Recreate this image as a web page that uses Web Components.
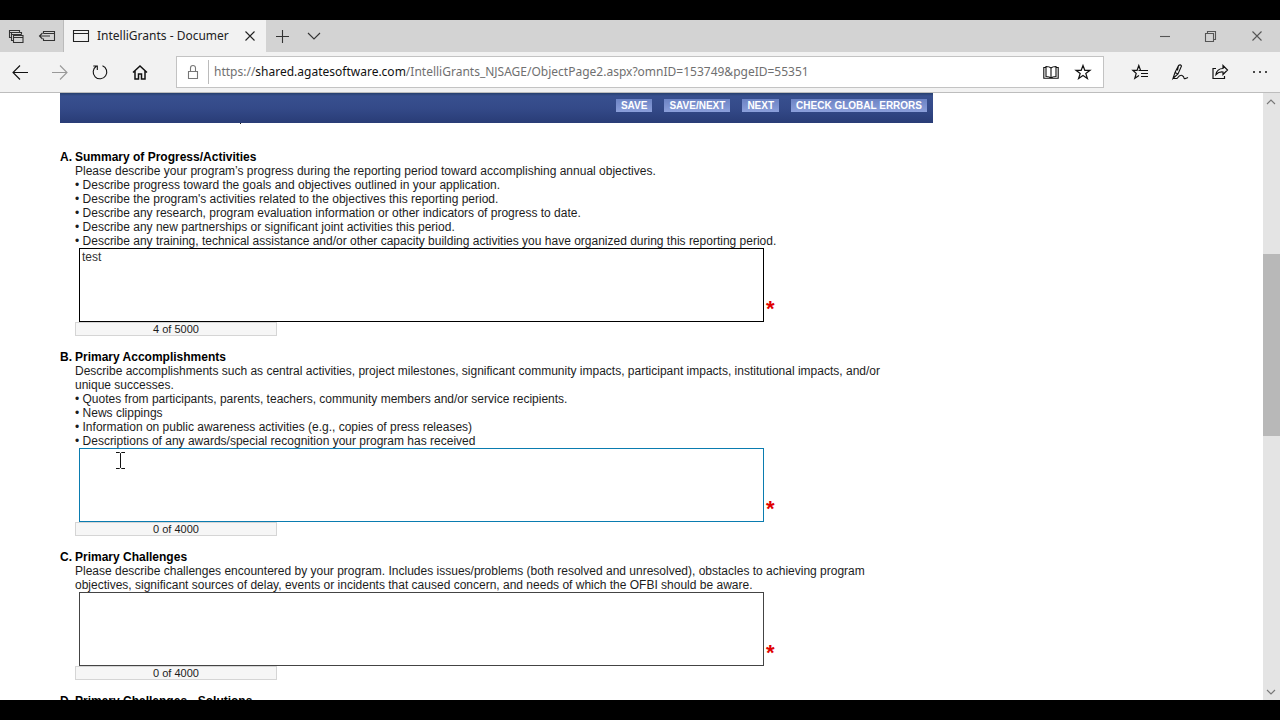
<!DOCTYPE html>
<html lang="en">
<head>
<meta charset="utf-8">
<title>IntelliGrants - Document</title>
<style>
html,body{height:100%;margin:0;background:#000}
body{font:12px/14px "Liberation Sans",Arial,sans-serif;color:#1c1c1c}
</style>
</head>
<body>
<browser-window></browser-window>
<script>
function define(name, html, setup) {
  const t = document.createElement('template');
  t.innerHTML = html;
  customElements.define(name, class extends HTMLElement {
    connectedCallback() {
      if (this.shadowRoot) return;
      const root = this.attachShadow({mode: 'open'});
      root.append(t.content.cloneNode(true));
      if (setup) setup(this, root);
    }
  });
}

const paths = {
  tabs: '<path d="M3.500 9.500h-2v-7h10v2M1.500 4.500h10M5.500 12.500h-2v-8h10v2M3.500 6.500h10M5.500 7.500h9.500v7h-9.500zM5.500 9.500h9.500"/>',
  aside: '<path d="M4.500 5.500v-2h11v9h-11v-2M4.500 5.500h11M0.500 8h10.500M3.500 5L0.500 8L3.500 11"/>',
  page: '<path d="M.5 2.500h15v11H.5zM.5 5.500h15"/>',
  close: '<path d="M3.500 3.500l9 9M12.500 3.500l-9 9"/>',
  plus: '<path d="M8.500 2v13M2 8.500h13"/>',
  down: '<path d="M2 5l6 6l6-6"/>',
  up: '<path d="M4 10.500l4-4l4 4"/>',
  lower: '<path d="M4 6.500l4 4l4-4"/>',
  back: '<path d="M16 8.500H1M8 1.500L1 8.500l7 7"/>',
  forward: '<path d="M0 8.500h15M8 1.500l7 7l-7 7"/>',
  reload: '<path d="M10.500 1.700A6.800 6.800 0 1 1 4.300 2.300M1.300 2h4v4"/>',
  home: '<path d="M1 8.500L8 2l7 6.500M3 7v8h3.500v-5h3v5H13V7" stroke-width="1.500"/>',
  lock: '<path d="M3.500 7.500h9v7h-9zM5.500 7.500V4a2.500 2.500 0 0 1 5 0v3.500"/>',
  book: '<path d="M8 4q-1.500-1.500-5-1.500v10Q6.500 12.500 8 14q1.500-1.500 5-1.500v-10Q9.500 2.500 8 4zM8 4v10M3 3.500H.8v10.800h14.400V3.500H13" stroke-width="1.100"/>',
  star: '<path d="M8 1.500l1.800 4.800h5.200l-4.200 3.200l1.600 5L8 11.500l-4.400 3l1.600-5L1 6.300h5.200z" stroke-width="1.200"/>',
  favs: '<path d="M8.500 6.300L6.800 1.500L5.100 6.300H.8l3.400 3.100l-1.400 4.900L7 11.500M6.500 6.500H16M9 9.500h7M9 12.500h7" stroke-width="1.200"/>',
  pen: '<path d="M1 14.500L3 8.500L6.500 1.500q2-1.500 3 .5L6 10zM3 8.500L6 10M6.500 1.500l-1 5M1 14.500h4q3-4 5-3t2 2.500t4-.5" stroke-width="1.100"/>',
  share: '<path d="M4 4.500H1v10h11.500v-2.500M4 10.500q1-6 7-6V1.500L15.500 6L11 10.500V8Q7 7.500 4 10.500z" stroke-width="1.200"/>',
  more: '<g fill="currentColor" stroke="none"><circle cx="2" cy="8" r="1"/><circle cx="8" cy="8" r="1"/><circle cx="14" cy="8" r="1"/></g>',
  min: '<path d="M3 8.500h10"/>',
  restore: '<path d="M2.500 5.500h8v8h-8zM4.500 5.500v-2h8v8h-2"/>'
};

define('ui-icon', `<style>
:host{display:block;width:16px;height:16px}
svg{display:block;width:100%;height:100%;fill:none;stroke:currentColor;stroke-width:1.1;overflow:visible}
</style><svg viewBox="0 0 16 16" aria-hidden="true"></svg>`,
(el, root) => { root.querySelector('svg').innerHTML = paths[el.getAttribute('name')]; });

define('icon-button', `<style>
:host{display:block}
button{display:flex;align-items:center;justify-content:center;width:100%;height:100%;padding:0;border:0;background:none;color:inherit}
</style><button type="button"></button>`,
(el, root) => {
  const button = root.querySelector('button');
  button.setAttribute('aria-label', el.getAttribute('label'));
  const icon = document.createElement('ui-icon');
  icon.setAttribute('name', el.getAttribute('name'));
  button.append(icon);
});

define('tab-strip', `<style>
:host{display:flex;height:32px;background:#d3d3d3;color:#333}
icon-button{width:32px}
.left{display:flex;width:64px;box-sizing:border-box;border-right:1px solid #bbb}
.tab{display:flex;align-items:center;gap:8px;width:202px;box-sizing:border-box;padding:0 0 0 9px;background:#f2f2f2;color:#222;font:12px/20px "Noto Sans",sans-serif}
.tab span{flex:1;white-space:nowrap}
.tab icon-button{height:32px;margin-left:-8px}
.window{display:flex;margin-left:auto;color:#555}
.window icon-button{width:46px}
</style>
<div class="left"><icon-button name="tabs" label="Tabs you've set aside"></icon-button><icon-button name="aside" label="Set these tabs aside"></icon-button></div>
<div class="tab"><ui-icon name="page"></ui-icon><span>IntelliGrants - Documer</span><icon-button name="close" label="Close tab"></icon-button></div>
<icon-button name="plus" label="New tab"></icon-button><icon-button name="down" label="Tab previews"></icon-button>
<div class="window"><icon-button name="min" label="Minimize"></icon-button><icon-button name="restore" label="Restore"></icon-button><icon-button name="close" label="Close"></icon-button></div>`);

define('address-bar', `<style>
:host{display:flex;align-items:center;height:41px;background:#f2f2f2;border-bottom:1px solid #bdbdbd;color:#111;box-sizing:border-box}
icon-button{width:40px;height:40px}
.dim{color:#999}
.url{flex:1;display:flex;align-items:center;height:32px;box-sizing:border-box;border:1px solid #c3c3c3;background:#fff;margin:0 16px;padding-right:4px}
.lock{width:31px;color:#777}
.url a{flex:1;border-left:1px solid #bbb;padding-left:5px;color:#707070;text-decoration:none;font:12px/24px "Noto Sans",sans-serif;white-space:nowrap}
.url span{color:#111}
.url .act{width:32px}
</style>
<icon-button name="back" label="Back"></icon-button><icon-button class="dim" name="forward" label="Forward"></icon-button><icon-button name="reload" label="Refresh"></icon-button><icon-button name="home" label="Home"></icon-button>
<div class="url"><icon-button class="lock" name="lock" label="Site information"></icon-button><a href="#">https://<span>shared.agatesoftware.com</span>/IntelliGrants_NJSAGE/ObjectPage2.aspx?omnID=153749&amp;pgeID=55351</a><icon-button class="act" name="book" label="Reading view"></icon-button><icon-button class="act" name="star" label="Add to favorites"></icon-button></div>
<icon-button name="favs" label="Favorites"></icon-button><icon-button name="pen" label="Add notes"></icon-button><icon-button name="share" label="Share"></icon-button><icon-button name="more" label="Settings and more"></icon-button>`);

define('scroll-bar', `<style>
:host{display:flex;flex-direction:column;width:17px;background:#e4e4e4;color:#777}
ui-icon{height:17px;flex:none}
.before{flex:144}.thumb{flex:182;background:#b8b8b8}.after{flex:247}
</style><ui-icon name="up"></ui-icon><div class="before"></div><div class="thumb"></div><div class="after"></div><ui-icon name="lower"></ui-icon>`);

define('action-bar', `<style>
:host{display:flex;justify-content:flex-end;gap:12px;position:relative;height:30px;box-sizing:border-box;padding:6px 6px 0 0;background:linear-gradient(#263f6d,#38508f 3px,#344a89 50%,#293c76)}
:host::after{content:"";position:absolute;left:180px;top:30px;width:1px;height:1px;background:#222}
button{height:13px;border:0;padding:0 5px;background:linear-gradient(#6c83c4,#8b9fda);color:#fff;font:bold 10px/13px "Liberation Sans",Arial,sans-serif}
</style><button type="button">SAVE</button><button type="button">SAVE/NEXT</button><button type="button">NEXT</button><button type="button">CHECK GLOBAL ERRORS</button>`);

define('report-question', `<style>
:host{display:grid;grid-template-columns:15px minmax(0,1fr);padding-bottom:14px}
b,label{font-weight:bold;color:#000;white-space:nowrap}
.body{grid-column:2}
.field{display:flex;padding-left:4px;gap:2px}
textarea{width:685px;height:74px;box-sizing:border-box;margin:0;border:1px solid var(--edge,#444);padding:1px 2px;resize:none;background:#fff;color:#333;font:12px/14px "Liberation Sans",Arial,sans-serif;outline:0}
.req{align-self:flex-end;color:#e00000;font:bold 22px/26px "Liberation Sans",Arial,sans-serif}
output{display:block;width:202px;height:14px;box-sizing:border-box;border:1px solid #d5d5d5;background:#f6f6f6;text-align:center;font-size:11px;line-height:13px}
</style>
<b></b><label for="answer"></label>
<div class="body"><slot></slot><div class="field"><textarea id="answer"></textarea><span class="req">*</span></div><output for="answer"></output></div>`,
(el, root) => {
  root.querySelector('b').textContent = el.getAttribute('letter');
  root.querySelector('label').textContent = el.getAttribute('heading');
  const v = el.getAttribute('value') || '';
  root.querySelector('textarea').value = v;
  root.querySelector('output').textContent = v.length + ' of ' + el.getAttribute('max');
});

define('report-page', `<style>
:host{display:block;box-sizing:border-box;padding-left:60px;overflow:hidden;background:#fff}
main{max-width:873px}
form{padding-top:27px}
.active{--edge:#0a7cb0}
.filled{--edge:#000}
</style>
<main><action-bar></action-bar><form>
<report-question class="filled" letter="A." heading="Summary of Progress/Activities" value="test" max="5000">Please describe your program’s progress during the reporting period toward accomplishing annual objectives.<br>• Describe progress toward the goals and objectives outlined in your application.<br>• Describe the program's activities related to the objectives this reporting period.<br>• Describe any research, program evaluation information or other indicators of progress to date.<br>• Describe any new partnerships or significant joint activities this period.<br>• Describe any training, technical assistance and/or other capacity building activities you have organized during this reporting period.</report-question>
<report-question class="active" letter="B." heading="Primary Accomplishments" max="4000">Describe accomplishments such as central activities, project milestones, significant community impacts, participant impacts, institutional impacts, and/or<br>unique successes.<br>• Quotes from participants, parents, teachers, community members and/or service recipients.<br>• News clippings<br>• Information on public awareness activities (e.g., copies of press releases)<br>• Descriptions of any awards/special recognition your program has received</report-question>
<report-question letter="C." heading="Primary Challenges" max="4000">Please describe challenges encountered by your program. Includes issues/problems (both resolved and unresolved), obstacles to achieving program<br>objectives, significant sources of delay, events or incidents that caused concern, and needs of which the OFBI should be aware.</report-question>
<report-question letter="D." heading="Primary Challenges - Solutions" max="4000"></report-question>
</form></main>`);

define('browser-window', `<style>
:host{display:flex;flex-direction:column;position:relative;height:100vh;box-sizing:border-box;padding:20px 0;background:#000}
tab-strip,address-bar{flex:none}
.view{display:flex;flex:1;min-height:0}
report-page{flex:1;min-width:0}
.cursor{position:absolute;left:115px;top:452px;width:11px;height:17px;fill:none;stroke:#111}
</style>
<tab-strip></tab-strip><address-bar></address-bar>
<div class="view"><report-page></report-page><scroll-bar></scroll-bar></div>
<svg class="cursor" viewBox="0 0 11 17" aria-hidden="true"><path d="M1 .5h3.500l1 1l1-1H10M5.500 1.500v14M1 16.500h3.500l1-1l1 1H10"/></svg>`);
</script>
</body>
</html>
